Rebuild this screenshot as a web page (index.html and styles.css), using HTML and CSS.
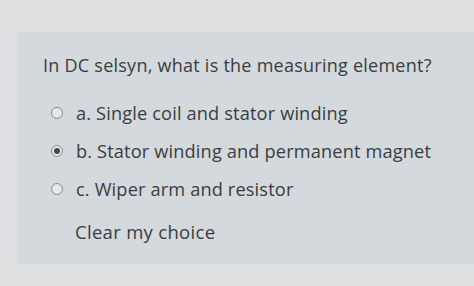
FILE: index.html
```html
<!DOCTYPE html>
<html>
<head>
<meta charset="utf-8">
<link rel="stylesheet" href="styles.css">
</head>
<body>
<div class="card">
  <div class="question">In DC selsyn, what is the measuring element?</div>
  <div class="answers">
    <div class="option"><span class="radio"></span><span class="label">a. Single coil and stator winding</span></div>
    <div class="option"><span class="radio checked"></span><span class="label">b. Stator winding and permanent magnet</span></div>
    <div class="option"><span class="radio"></span><span class="label">c. Wiper arm and resistor</span></div>
  </div>
  <div class="clear">Clear my choice</div>
</div>
</body>
</html>
```
FILE: styles.css
```css
html, body {
  margin: 0;
  padding: 0;
}
body {
  width: 474px;
  height: 286px;
  overflow: hidden;
  background: #dedfe0;
  font-family: "Open Sans", "Noto Sans", sans-serif;
  color: #3a3d41;
}
.card {
  margin: 32px 0 0 17px;
  height: 232px;
  background: #d3d9dc;
  padding: 0 0 0 26px;
  box-sizing: border-box;
}
.question {
  padding-top: 22px;
  font-size: 18px;
  line-height: 22px;
  letter-spacing: 0.25px;
}
.answers {
  margin-top: 26px;
  padding-left: 8px;
  display: flex;
  flex-direction: column;
  gap: 16px;
}
.option {
  display: flex;
  align-items: center;
  height: 22px;
  font-size: 18.2px;
  letter-spacing: 0.15px;
}
.radio {
  width: 12px;
  height: 12px;
  box-sizing: border-box;
  border: 1.5px solid #878b8f;
  border-radius: 50%;
  background: #e4e8ea;
  margin-right: 13px;
  display: flex;
  align-items: center;
  justify-content: center;
}
.radio.checked::after {
  content: "";
  width: 6px;
  height: 6px;
  border-radius: 50%;
  background: #45484c;
}
.clear {
  margin-top: 21px;
  padding-left: 32px;
  font-size: 18.5px;
  line-height: 22px;
  letter-spacing: 0.3px;
}
```
